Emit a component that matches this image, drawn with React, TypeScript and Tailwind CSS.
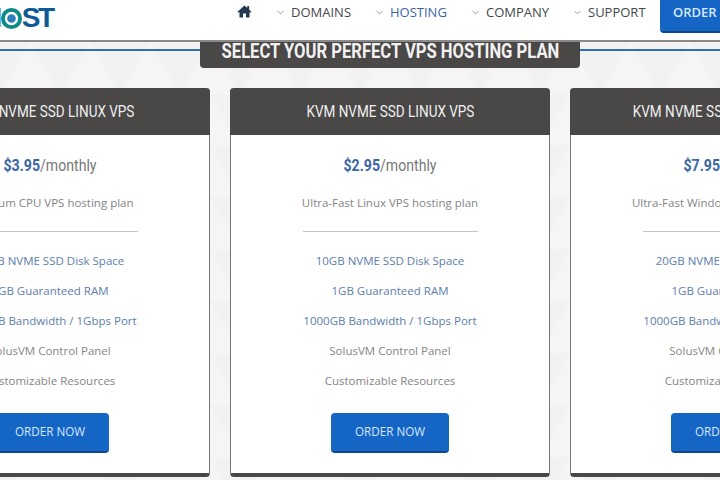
import { ChevronDown } from "lucide-react";

const plans = [
  { name: "KVM NVME SSD LINUX VPS", price: "$3.95", blurb: "Premium CPU VPS hosting plan", disk: "20GB NVME SSD Disk Space", ram: "2GB Guaranteed RAM", bw: "2000GB Bandwidth / 1Gbps Port" },
  { name: "KVM NVME SSD LINUX VPS", price: "$2.95", blurb: "Ultra-Fast Linux VPS hosting plan", disk: "10GB NVME SSD Disk Space", ram: "1GB Guaranteed RAM", bw: "1000GB Bandwidth / 1Gbps Port" },
  { name: "KVM NVME SSD WINDOWS VPS", price: "$7.95", blurb: "Ultra-Fast Windows VPS hosting plan", disk: "20GB NVME SSD Disk Space", ram: "1GB Guaranteed RAM", bw: "1000GB Bandwidth / 1Gbps Port" },
];

const navItems = [
  { label: "DOMAINS", active: false, width: "w-[99px]" },
  { label: "HOSTING", active: true, width: "w-[96px]" },
  { label: "COMPANY", active: false, width: "w-[102px]" },
  { label: "SUPPORT", active: false, width: "w-[88px]" },
];

const NavItem = ({ label, active, width }: { label: string; active: boolean; width: string }) => (
  <div className={`flex items-center gap-[5px] ${width}`}>
    <ChevronDown size={11} strokeWidth={1.25} className="shrink-0 text-[#555]" />
    <span className={`text-[13px] ${active ? "text-[#3a66a8]" : "text-[#44484c]"}`}>{label}</span>
  </div>
);

const Card = ({ plan }: { plan: (typeof plans)[number] }) => (
  <div className="w-[320px] h-[389px] shrink-0 bg-white rounded-[4px] border-x border-x-[#777] border-b-[4px] border-b-[#4a4747] flex flex-col items-center">
    <div className="w-[320px] -mx-px h-[47px] shrink-0 bg-[#4a4747] rounded-t-[4px] pt-[1px] flex items-center justify-center font-['Roboto',sans-serif] text-[16px] text-[#f0f0f0] whitespace-nowrap">
      <span className="scale-x-[0.845]">{plan.name}</span>
    </div>
    <div className="mt-[20px] h-[22px] flex items-center whitespace-nowrap font-['Roboto',sans-serif] text-[17px] scale-x-[0.83]">
      <span className="font-bold text-[#3a66a8]">{plan.price}</span>
      <span className="text-[#777]">/monthly</span>
    </div>
    <div className="mt-[16px] h-[20px] flex items-center whitespace-nowrap text-[11.5px] text-[#858585]">{plan.blurb}</div>
    <div className="mt-[18px] w-[175px] h-px bg-[#c4c4c4]" />
    <div className="mt-[19px] flex flex-col items-center gap-[10px] text-[11.5px] whitespace-nowrap">
      <div className="h-[20px] flex items-center text-[#5c7eac]">{plan.disk}</div>
      <div className="h-[20px] flex items-center text-[#5c7eac]">{plan.ram}</div>
      <div className="h-[20px] flex items-center text-[#5c7eac]">{plan.bw}</div>
      <div className="h-[20px] flex items-center text-[#858585]">SolusVM Control Panel</div>
      <div className="h-[20px] flex items-center text-[#858585]">Customizable Resources</div>
    </div>
    <button className="mt-[22px] w-[118px] h-[40px] bg-[#1565c5] border-b-[2px] border-b-[#0f478c] rounded-[4px] text-[11.7px] font-medium text-[#d5e8ff]">
      ORDER NOW
    </button>
  </div>
);

export default function App() {
  return (
    <div className="relative w-[720px] h-[480px] overflow-hidden bg-[#f2f2f2] font-['Open_Sans',sans-serif]">
      {/* faint triangle texture behind the page */}
      <svg width="720" height="438" className="absolute left-0 top-[42px]">
        <defs>
          <pattern id="tri" width="60" height="52" patternUnits="userSpaceOnUse">
            <polygon points="30,0 60,52 0,52" fill="#f5f5f5" />
          </pattern>
        </defs>
        <rect width="720" height="438" fill="url(#tri)" />
      </svg>

      <header className="relative h-[42px] bg-white border-b-[2px] border-b-[#8a8a8a] flex items-start">
        <div className="w-[237px] shrink-0 h-full flex items-center pb-[4px] overflow-hidden">
          <div className="flex items-center -ml-[18px] font-['Liberation_Sans',sans-serif] font-bold text-[28px] text-[#0e5a96] tracking-[-2.5px]">
            <span>H</span>
            <svg width="21" height="21" viewBox="0 0 22 22" className="ml-[1px] shrink-0">
              <circle cx="11" cy="11" r="9" fill="none" stroke="#0b8a86" strokeWidth="4" />
              <circle cx="11" cy="11" r="4.5" fill="#2c7fb8" />
            </svg>
            <span>ST</span>
          </div>
        </div>
        <svg width="15" height="13" viewBox="0 0 16 14" className="shrink-0 mt-[5px]">
          <path d="M8 0.5 0.5 7.2 1.6 8.4 2.6 7.5V13.5H6.4V9.2H9.6V13.5H13.4V7.5L14.4 8.4 15.5 7.2 13 5V1.2H11V3.2Z" fill="#22384f" />
        </svg>
        <div className="ml-[23px] mt-[3px] flex items-center">
          {navItems.map((item) => (
            <NavItem key={item.label} {...item} />
          ))}
        </div>
        <div className="shrink-0 w-[80px] h-[33px] bg-[#1565c5] border-b-[2px] border-b-[#0f478c] rounded-b-[4px] pl-[13px] pb-[5px] flex items-center text-[13px] font-semibold text-[#d5e8ff]">
          ORDER
        </div>
      </header>

      <section className="relative h-[46px] flex items-start">
        <div className="w-[200px] mt-[7px] h-[2px] bg-[#2f6fb8]" />
        <div className="w-[380px] shrink-0 h-[26px] bg-[#4a4747] rounded-b-[4px] pb-[8px] flex items-center justify-center font-['Roboto',sans-serif] text-[20px] font-bold text-[#f2f2f2] whitespace-nowrap">
          <span className="scale-x-[0.83]">SELECT YOUR PERFECT VPS HOSTING PLAN</span>
        </div>
        <div className="flex-1 mt-[7px] h-[2px] bg-[#2f6fb8]" />
      </section>

      <main className="relative flex gap-[20px] -ml-[110px]">
        {plans.map((plan, i) => (
          <Card key={i} plan={plan} />
        ))}
      </main>
    </div>
  );
}
